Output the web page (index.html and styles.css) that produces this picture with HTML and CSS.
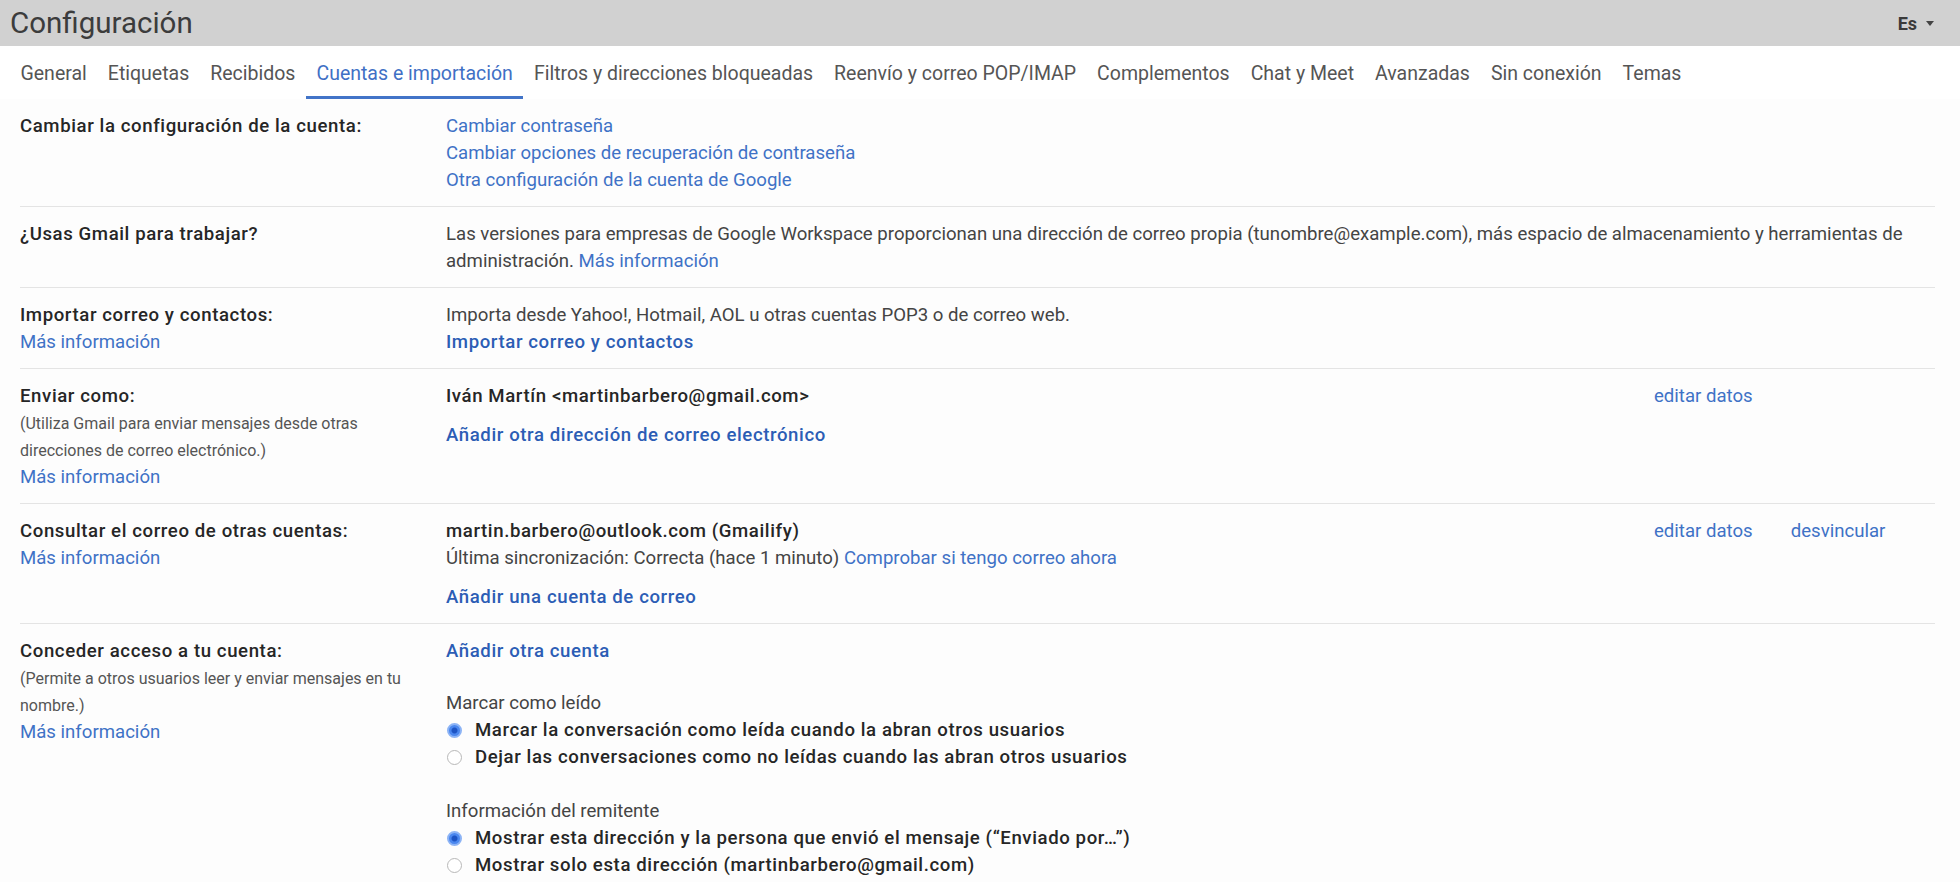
FILE: index.html
```html
<!DOCTYPE html>
<html lang="es">
    <head>
        <meta charset="UTF-8" />
        <title>Configuración</title>
        <link rel="stylesheet" href="styles.css">
    </head>

    <body>
        <header class="topbar">
            <h1 class="title">Configuración</h1>
            <div class="lang">Es <span class="caret"></span></div>
        </header>

        <nav class="tabs">
            <a class="tab">General</a>
            <a class="tab">Etiquetas</a>
            <a class="tab">Recibidos</a>
            <a class="tab active">Cuentas e importación</a>
            <a class="tab">Filtros y direcciones bloqueadas</a>
            <a class="tab">Reenvío y correo POP/IMAP</a>
            <a class="tab">Complementos</a>
            <a class="tab">Chat y Meet</a>
            <a class="tab">Avanzadas</a>
            <a class="tab">Sin conexión</a>
            <a class="tab">Temas</a>
        </nav>

        <main class="settings">
            <section class="row">
                <div class="label">
                    <p class="label-title">Cambiar la configuración de la cuenta:</p>
                </div>
                <div class="value">
                    <a class="link">Cambiar contraseña</a>
                    <a class="link">Cambiar opciones de recuperación de contraseña</a>
                    <a class="link">Otra configuración de la cuenta de Google</a>
                </div>
            </section>

            <section class="row">
                <div class="label">
                    <p class="label-title">¿Usas Gmail para trabajar?</p>
                </div>
                <div class="value">
                    <p class="text">Las versiones para empresas de Google Workspace proporcionan una dirección de correo propia (tunombre@example.com), más espacio de almacenamiento y herramientas de administración. <a class="link inline">Más información</a></p>
                </div>
            </section>

            <section class="row">
                <div class="label">
                    <p class="label-title">Importar correo y contactos:</p>
                    <a class="link">Más información</a>
                </div>
                <div class="value">
                    <p class="text">Importa desde Yahoo!, Hotmail, AOL u otras cuentas POP3 o de correo web.</p>
                    <a class="link strong">Importar correo y contactos</a>
                </div>
            </section>

            <section class="row">
                <div class="label">
                    <p class="label-title">Enviar como:</p>
                    <p class="note">(Utiliza Gmail para enviar mensajes desde otras<br>direcciones de correo electrónico.)</p>
                    <a class="link">Más información</a>
                </div>
                <div class="value">
                    <div class="account">
                        <p class="account-name">Iván Martín &lt;martinbarbero@gmail.com&gt;</p>
                        <div class="actions">
                            <a class="link">editar datos</a>
                        </div>
                    </div>
                    <a class="link strong spaced">Añadir otra dirección de correo electrónico</a>
                </div>
            </section>

            <section class="row">
                <div class="label">
                    <p class="label-title">Consultar el correo de otras cuentas:</p>
                    <a class="link">Más información</a>
                </div>
                <div class="value">
                    <div class="account">
                        <div>
                            <p class="account-name">martin.barbero@outlook.com (Gmailify)</p>
                            <p class="text">Última sincronización: Correcta (hace 1 minuto) <a class="link inline">Comprobar si tengo correo ahora</a></p>
                        </div>
                        <div class="actions">
                            <a class="link">editar datos</a>
                            <a class="link">desvincular</a>
                        </div>
                    </div>
                    <a class="link strong spaced">Añadir una cuenta de correo</a>
                </div>
            </section>

            <section class="row last">
                <div class="label">
                    <p class="label-title">Conceder acceso a tu cuenta:</p>
                    <p class="note">(Permite a otros usuarios leer y enviar mensajes en tu<br>nombre.)</p>
                    <a class="link">Más información</a>
                </div>
                <div class="value">
                    <a class="link strong">Añadir otra cuenta</a>

                    <div class="option-group">
                        <p class="text">Marcar como leído</p>
                        <label class="radio"><span class="dot checked"></span>Marcar la conversación como leída cuando la abran otros usuarios</label>
                        <label class="radio"><span class="dot"></span>Dejar las conversaciones como no leídas cuando las abran otros usuarios</label>
                    </div>

                    <div class="option-group">
                        <p class="text">Información del remitente</p>
                        <label class="radio"><span class="dot checked"></span>Mostrar esta dirección y la persona que envió el mensaje (“Enviado por…”)</label>
                        <label class="radio"><span class="dot"></span>Mostrar solo esta dirección (martinbarbero@gmail.com)</label>
                    </div>
                </div>
            </section>
        </main>
    </body>
</html>
```

FILE: styles.css
```css
* {
    margin: 0;
    padding: 0;
    box-sizing: border-box;
}

body {
    background-color: #fdfdfd;
    color: #444;
    font-family: Roboto, "Liberation Sans", sans-serif;
    font-size: 18.6px;
    overflow: hidden;
}

/* Gray title bar */
.topbar {
    display: flex;
    align-items: center;
    justify-content: space-between;
    height: 46px;
    padding: 0 26px 0 10px;
    background-color: #d1d1d1;
}

.title {
    font-size: 29.5px;
    font-weight: 400;
    color: #3c3c3c;
}

.lang {
    display: flex;
    align-items: center;
    gap: 9px;
    font-size: 18px;
    font-weight: 700;
    color: #3a3a3a;
}

.caret {
    width: 0;
    height: 0;
    border-left: 4px solid transparent;
    border-right: 4px solid transparent;
    border-top: 5px solid #444;
}

/* Tabs */
.tabs {
    display: flex;
    padding-left: 10px;
    background-color: #fff;
}

.tab {
    padding: 17px 10.5px 11px;
    line-height: 22px;
    font-size: 19.5px;
    color: #555;
    border-bottom: 3px solid transparent;
    white-space: nowrap;
}

.tab.active {
    color: #3f70c5;
    border-bottom-color: #4274c8;
}

/* Settings rows */
.settings {
    padding: 0 25px 0 20px;
}

.row {
    display: grid;
    grid-template-columns: 426px 1fr;
    padding: 14px 0 12px;
    border-bottom: 1px solid #e4e4e4;
    line-height: 27px;
}

.row.last {
    border-bottom: none;
}

.label-title {
    font-weight: 500;
    letter-spacing: 0.6px;
    color: #262626;
}

.note {
    font-size: 16px;
    color: #555;
}

.link {
    display: block;
    color: #3f72c6;
    cursor: pointer;
}

.link.inline {
    display: inline;
}

.link.strong {
    font-weight: 500;
    letter-spacing: 0.6px;
    color: #2c5db5;
}

.link.spaced {
    margin-top: 12px;
}

.text {
    color: #444;
}

.account {
    display: grid;
    grid-template-columns: 1208px auto;
}

.account-name {
    font-weight: 500;
    letter-spacing: 0.6px;
    color: #262626;
}

.actions {
    display: flex;
    gap: 38px;
}

.option-group {
    margin-top: 25px;
}

.option-group + .option-group {
    margin-top: 27px;
}

.radio {
    display: flex;
    align-items: center;
    gap: 13px;
    padding-left: 1px;
    font-weight: 500;
    letter-spacing: 0.6px;
    color: #262626;
}

.dot {
    flex: none;
    width: 15px;
    height: 15px;
    border-radius: 50%;
    border: 1px solid #b8b8b8;
    background-color: #fff;
}

.dot.checked {
    border: 2px solid #8db4f5;
    background: radial-gradient(circle, #1d54c4 0 2.5px, #4a87ef 3.5px);
}
```
